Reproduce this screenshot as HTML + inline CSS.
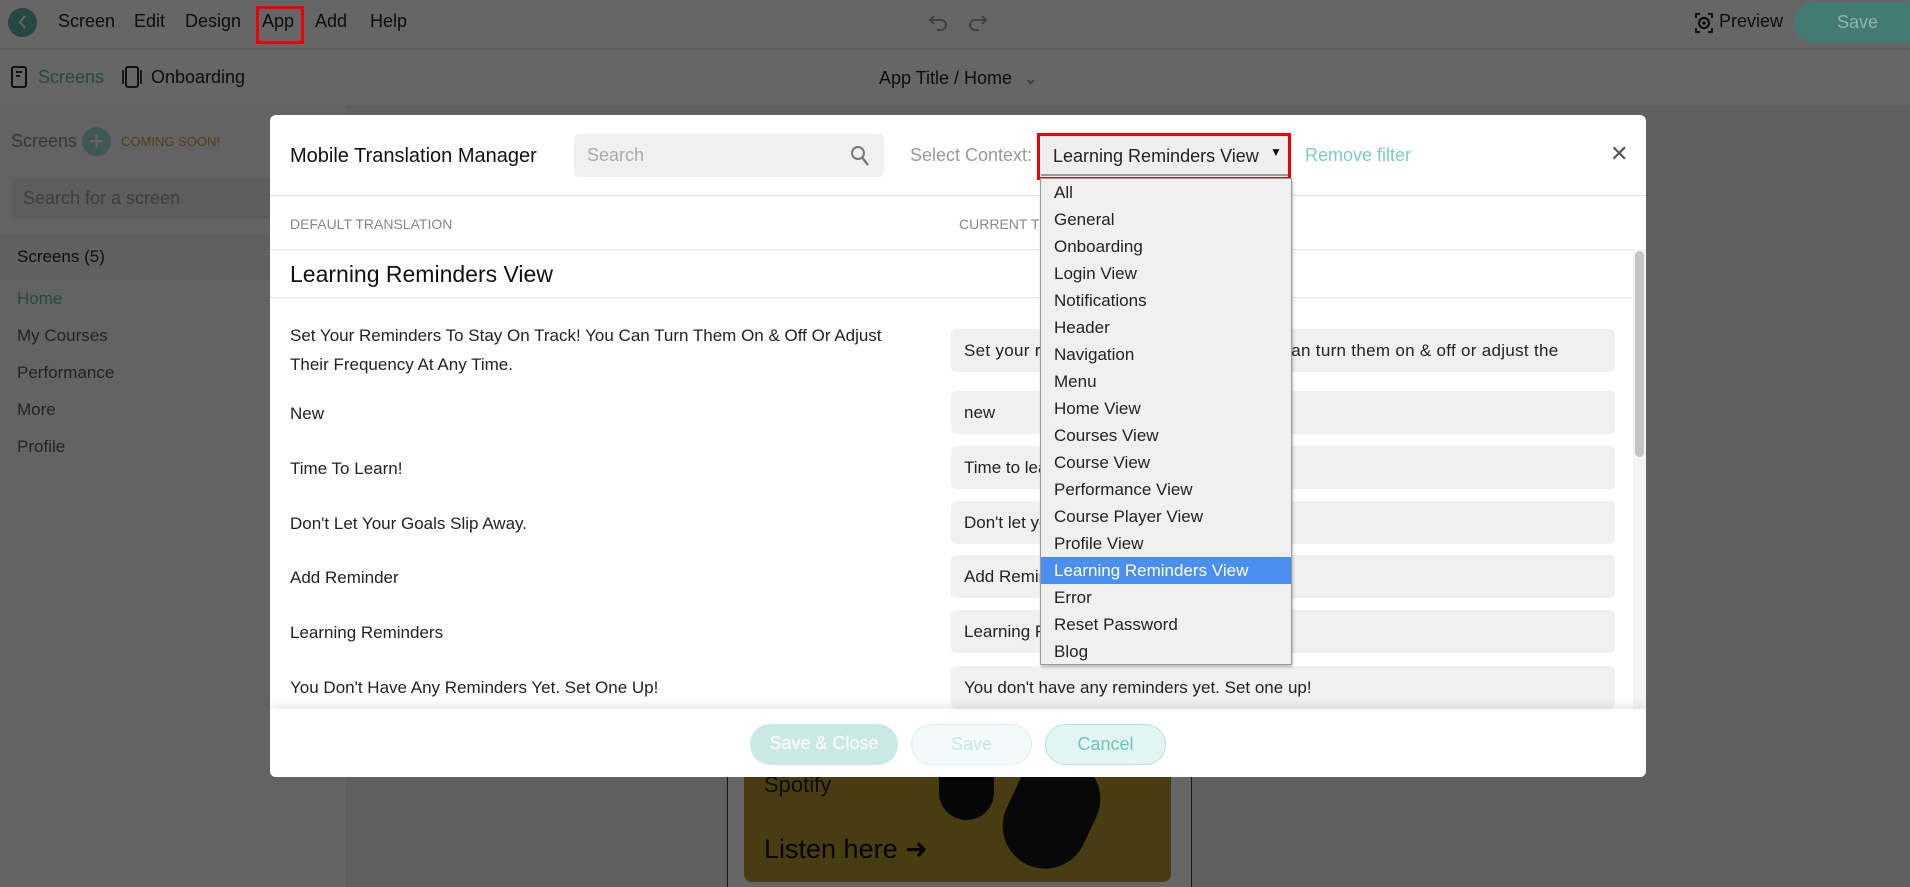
<!DOCTYPE html>
<html><head><meta charset="utf-8"><style>
*{box-sizing:border-box;margin:0;padding:0}
body{width:1910px;height:887px;overflow:hidden;position:relative;font-family:"Liberation Sans",sans-serif;background:#f0f0f0;color:#222}
.a{position:absolute;white-space:nowrap}
.ov{position:absolute;left:0;top:0;width:1910px;height:887px;background:rgba(0,0,0,0.6)}
.m{position:absolute;left:270px;top:115px;width:1376px;height:662px;background:#fff;border-radius:6px;overflow:hidden}
.fld{position:absolute;left:681px;width:664px;background:#f0f0f0;border-radius:5px;font-size:17px;padding:0 13px;line-height:43px;overflow:hidden;white-space:nowrap;color:#222}
.lt{position:absolute;left:20px;font-size:17px;color:#222;line-height:29px}
.hr{position:absolute;left:0;width:1376px;height:1px;background:#e2e2e2}
.dd{position:absolute;left:1040px;top:178px;width:252px;height:487px;background:#f0f0f0;border:1px solid #9a9a9a;box-shadow:1px 2px 3px rgba(0,0,0,.25)}
.dd div{height:27px;line-height:27px;padding-left:13px;font-size:17px;color:#222}
.dd .sel{background:#4a8ff0;color:#fff}
.btn{position:absolute;top:609px;height:41px;border-radius:21px;font-size:18px;text-align:center;line-height:39px}
</style></head><body>
<div class="a" style="left:0;top:0;width:1910px;height:49px;background:#fff;border-bottom:1px solid #e6e6e6"></div>
<div class="a" style="left:8px;top:8px;width:29px;height:29px;border-radius:50%;background:#5fb5a9"></div>
<svg class="a" style="left:14px;top:13px" width="18" height="18" viewBox="0 0 18 18"><path d="M11 3 L6 9 L11 15" stroke="#fff" stroke-width="2" fill="none"/></svg>
<div class="a" style="left:58px;top:11px;font-size:18px;color:#222">Screen</div>
<div class="a" style="left:134px;top:11px;font-size:18px">Edit</div>
<div class="a" style="left:185px;top:11px;font-size:18px">Design</div>
<div class="a" style="left:262px;top:11px;font-size:18px">App</div>
<div class="a" style="left:315px;top:11px;font-size:18px">Add</div>
<div class="a" style="left:370px;top:11px;font-size:18px">Help</div>
<svg class="a" style="left:926px;top:12px" width="24" height="20" viewBox="0 0 24 20"><path d="M8 4 L4 8 L8 12 M4 8 H15 a5 5 0 0 1 0 10 H11" stroke="#999" stroke-width="1.8" fill="none"/></svg>
<svg class="a" style="left:966px;top:12px" width="24" height="20" viewBox="0 0 24 20"><path d="M16 4 L20 8 L16 12 M20 8 H9 a5 5 0 0 0 0 10 H13" stroke="#999" stroke-width="1.8" fill="none"/></svg>
<svg class="a" style="left:1694px;top:12px" width="20" height="22" viewBox="0 0 20 22"><path d="M2 6V2h4M14 2h4v4M18 16v4h-4M6 20H2v-4" stroke="#111" stroke-width="1.8" fill="none"/><circle cx="10" cy="11" r="5" stroke="#111" stroke-width="2" fill="none"/><circle cx="10" cy="11" r="1.8" fill="#111"/></svg>
<div class="a" style="left:1719px;top:11px;font-size:18px;color:#222">Preview</div>
<div class="a" style="left:0;top:50px;width:1910px;height:55px;background:#fff"></div>
<svg class="a" style="left:11px;top:66px" width="16" height="22" viewBox="0 0 16 22"><rect x="1" y="1" width="14" height="20" rx="2" stroke="#111" stroke-width="1.8" fill="none"/><path d="M5 6h6M5 10h4" stroke="#111" stroke-width="1.8"/></svg>
<div class="a" style="left:38px;top:67px;font-size:18px;color:#5fb5a9">Screens</div>
<svg class="a" style="left:122px;top:66px" width="20" height="22" viewBox="0 0 20 22"><rect x="4" y="1" width="12" height="20" rx="2" stroke="#111" stroke-width="1.8" fill="none"/><path d="M1 4v14M19 4v14" stroke="#111" stroke-width="1.6"/></svg>
<div class="a" style="left:151px;top:67px;font-size:18px">Onboarding</div>
<div class="a" style="left:879px;top:68px;font-size:18px">App Title / Home <span style="color:#888;margin-left:6px">⌄</span></div>
<div class="a" style="left:0;top:105px;width:347px;height:782px;background:#f7f7f7;border-right:1px solid #e8e8e8"></div>
<div class="a" style="left:11px;top:131px;font-size:18px;color:#888">Screens</div>
<div class="a" style="left:82px;top:127px;width:29px;height:29px;border-radius:50%;background:#9fdcd4;color:#fff;text-align:center;font-size:26px;line-height:28px">+</div>
<div class="a" style="left:121px;top:134px;font-size:13px;color:#d9983a">COMING SOON!</div>
<div class="a" style="left:11px;top:178px;width:330px;height:41px;border-radius:5px;background:#e8e8e8;font-size:18px;color:#999;padding:10px 12px">Search for a screen</div>
<div class="a" style="left:0;top:234px;width:347px;height:46px;background:#efefef"></div>
<div class="a" style="left:17px;top:247px;font-size:17px">Screens (5)</div>
<div class="a" style="left:17px;top:289px;font-size:17px;color:#5fb5a9">Home</div>
<div class="a" style="left:17px;top:326px;font-size:17px;color:#555">My Courses</div>
<div class="a" style="left:17px;top:363px;font-size:17px;color:#555">Performance</div>
<div class="a" style="left:17px;top:400px;font-size:17px;color:#555">More</div>
<div class="a" style="left:17px;top:437px;font-size:17px;color:#555">Profile</div>
<div class="a" style="left:727px;top:700px;width:465px;height:187px;background:#fff;border-left:1px solid #333;border-right:1px solid #333"></div>
<div class="a" style="left:744px;top:700px;width:427px;height:182px;background:#b59a2d;border-radius:8px;overflow:hidden">
<div class="a" style="left:20px;top:72px;font-size:22px;color:#222">Spotify</div>
<div class="a" style="left:20px;top:134px;font-size:27px;color:#111">Listen here ➜</div>
<div class="a" style="left:195px;top:10px;width:55px;height:110px;border-radius:28px;background:#111"></div>
<div class="a" style="left:265px;top:55px;width:85px;height:115px;border-radius:45px;background:#151515;transform:rotate(25deg)"></div>
</div>
<div class="ov"></div>
<div class="a" style="left:1794px;top:2px;width:130px;height:41px;border-radius:21px;background:#437a72;color:#8fb5b0;font-size:18px;line-height:41px;padding-left:43px">Save</div>
<div class="a" style="left:256px;top:6px;width:48px;height:38px;border:3px solid #e00"></div>
<div class="m">
<div class="a" style="left:20px;top:30px;font-size:20px;color:#111">Mobile Translation Manager</div>
<div class="a" style="left:304px;top:19px;width:310px;height:43px;background:#f0f0f0;border-radius:5px;font-size:18px;color:#aaa;padding:11px 13px">Search</div>
<svg class="a" style="left:580px;top:30px" width="20" height="22" viewBox="0 0 20 22"><circle cx="8" cy="8" r="6" stroke="#777" stroke-width="2" fill="none"/><path d="M12.5 13 L18 20" stroke="#777" stroke-width="2.4"/></svg>
<div class="a" style="left:640px;top:30px;font-size:18px;color:#999">Select Context:</div>
<div class="a" style="left:767px;top:18px;width:254px;height:47px;border:3px solid #e00"></div>
<div class="a" style="left:771px;top:21px;width:247px;height:40px;background:#efefef;border-bottom:2px solid #999;font-size:18px;padding:10px 12px;color:#222">Learning Reminders View</div>
<div class="a" style="left:1000px;top:30px;font-size:12px;color:#111">▼</div>
<div class="a" style="left:1035px;top:30px;font-size:18px;color:#7ecbc4">Remove filter</div>
<div class="a" style="left:1340px;top:26px;font-size:22px;color:#555">✕</div>
<div class="hr" style="top:80px"></div>
<div class="a" style="left:20px;top:101px;font-size:14px;color:#888">DEFAULT TRANSLATION</div>
<div class="a" style="left:689px;top:101px;font-size:14px;color:#888">CURRENT TRANSLATION</div>
<div class="hr" style="top:134px"></div>
<div class="a" style="left:20px;top:146px;font-size:23px;color:#111">Learning Reminders View</div>
<div class="hr" style="top:182px;width:1362px"></div>
<div class="lt" style="top:206px">Set Your Reminders To Stay On Track! You Can Turn Them On &amp; Off Or Adjust<br>Their Frequency At Any Time.</div>
<div class="fld" style="top:214px;letter-spacing:0.3px">Set your reminders to stay on track! You can turn them on &amp; off or adjust the</div>
<div class="lt" style="top:284px">New</div><div class="fld" style="top:276px">new</div>
<div class="lt" style="top:339px">Time To Learn!</div><div class="fld" style="top:331px">Time to learn!</div>
<div class="lt" style="top:394px">Don't Let Your Goals Slip Away.</div><div class="fld" style="top:386px">Don't let your goals slip away.</div>
<div class="lt" style="top:448px">Add Reminder</div><div class="fld" style="top:440px">Add Reminder</div>
<div class="lt" style="top:503px">Learning Reminders</div><div class="fld" style="top:495px">Learning Reminders</div>
<div class="lt" style="top:558px">You Don't Have Any Reminders Yet. Set One Up!</div><div class="fld" style="top:551px">You don't have any reminders yet. Set one up!</div>
<div class="a" style="left:1363px;top:134px;width:13px;height:460px;background:#f4f4f4"></div>
<div class="a" style="left:1365px;top:136px;width:9px;height:206px;background:#c4c4c4;border-radius:5px"></div>
<div class="a" style="left:0;top:594px;width:1376px;height:68px;background:#fff;box-shadow:0 -4px 8px rgba(0,0,0,.08)"></div>
<div class="btn" style="left:480px;width:148px;background:#c8e9e5;color:#fff">Save &amp; Close</div>
<div class="btn" style="left:641px;width:121px;background:#f3faf9;border:1px solid #dcf1ee;color:#c5e6e2">Save</div>
<div class="btn" style="left:775px;width:121px;background:#e3f5f3;border:1px solid #b5e2dd;color:#6dc5bc">Cancel</div>
</div>
<div class="dd">
<div>All</div><div>General</div><div>Onboarding</div><div>Login View</div><div>Notifications</div><div>Header</div><div>Navigation</div><div>Menu</div><div>Home View</div><div>Courses View</div><div>Course View</div><div>Performance View</div><div>Course Player View</div><div>Profile View</div><div class="sel">Learning Reminders View</div><div>Error</div><div>Reset Password</div><div>Blog</div>
</div>
</body></html>
